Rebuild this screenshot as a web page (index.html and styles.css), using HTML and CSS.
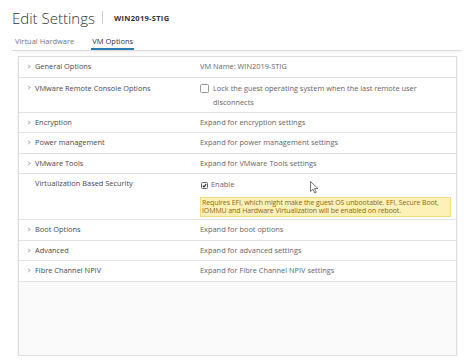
FILE: index.html
```html
<!DOCTYPE html>
<html>
	<head>
		<meta charset="UTF-8">
		<title>Edit Settings</title>
		<link rel="stylesheet" href="styles.css">
	</head>
	<body>
		<div class="dialog">
			<div class="head">
				<h1>Edit Settings</h1>
				<span class="sep"></span>
				<span class="vmname">WIN2019-STIG</span>
			</div>
			<div class="tabs">
				<span class="tab">Virtual Hardware</span>
				<span class="tab active">VM Options</span>
			</div>

			<div class="options">
				<div class="row">
					<div class="label"><span class="caret"></span>General Options</div>
					<div class="value">VM Name: WIN2019-STIG</div>
				</div>
				<div class="row tall">
					<div class="label"><span class="caret"></span>VMware Remote Console Options</div>
					<div class="value check">
						<span class="box"></span>
						<span>Lock the guest operating system when the last remote user disconnects</span>
					</div>
				</div>
				<div class="row">
					<div class="label"><span class="caret"></span>Encryption</div>
					<div class="value">Expand for encryption settings</div>
				</div>
				<div class="row">
					<div class="label"><span class="caret"></span>Power management</div>
					<div class="value">Expand for power management settings</div>
				</div>
				<div class="row">
					<div class="label"><span class="caret"></span>VMware Tools</div>
					<div class="value">Expand for VMware Tools settings</div>
				</div>
				<div class="row vbs">
					<div class="label"><span class="caret none"></span>Virtualization Based Security</div>
					<div class="value">
						<div class="enable">
							<span class="box checked">
								<svg width="6" height="6" viewBox="0 0 6 6"><path d="M1 3.2 L2.4 4.6 L5 1.4" fill="none" stroke="#222" stroke-width="1.3"/></svg>
							</span>
							Enable
							<svg class="cursor" width="9" height="13" viewBox="0 0 9 13"><path d="M0.5 0.5 L0.5 10.5 L3 8.2 L4.8 12 L6.3 11.3 L4.6 7.6 L8 7.6 Z" fill="#fff" stroke="#555" stroke-width="0.8" stroke-linejoin="round"/></svg>
						</div>
						<div class="warn">Requires EFI, which might make the guest OS unbootable. EFI, Secure Boot, IOMMU and Hardware Virtualization will be enabled on reboot.</div>
					</div>
				</div>
				<div class="row">
					<div class="label"><span class="caret"></span>Boot Options</div>
					<div class="value">Expand for boot options</div>
				</div>
				<div class="row">
					<div class="label"><span class="caret"></span>Advanced</div>
					<div class="value">Expand for advanced settings</div>
				</div>
				<div class="row">
					<div class="label"><span class="caret"></span>Fibre Channel NPIV</div>
					<div class="value">Expand for Fibre Channel NPIV settings</div>
				</div>
				<div class="empty"></div>
			</div>
		</div>
	</body>
</html>
```

FILE: styles.css
```css
body{margin:0;background:#fff;font-family:"Open Sans","Liberation Sans",sans-serif;color:#565656;}
.dialog{padding:0 0 0 12px;width:450px;}

.head{display:flex;align-items:center;height:35px;}
.head h1{margin:0;font-size:15px;font-weight:300;color:#333;line-height:20px;}
.head .sep{width:1px;height:13px;background:#ccc;margin:0 11px 0 7px;}
.head .vmname{font-size:7.5px;font-weight:700;color:#333;letter-spacing:0.3px;}

.tabs{display:flex;gap:17px;height:15px;border-bottom:1px solid #ddd;padding-left:3px;box-shadow:0 3px 3px -2px #eee;}
.tab{font-size:7.5px;color:#777;line-height:13px;}
.tab.active{color:#333;border-bottom:2px solid #2a7cae;padding:0 1px;}

.options{margin:5px 0 0 6px;width:437px;border:1px solid #ddd;background:#fafafa;box-shadow:0 1px 2px #e6e6e6;}
.row{display:flex;background:#fff;border-bottom:1px solid #e2e2e2;font-size:7.4px;line-height:11.5px;}
.row .label{width:181px;padding:4px 0 4px 7px;display:flex;align-items:flex-start;color:#4a4a4a;box-sizing:border-box;}
.row .value{flex:1;padding:4px 0;color:#666;}
.caret{width:8px;height:11.5px;position:relative;margin-right:1px;flex:none;}
.caret:after{content:"";position:absolute;left:1px;top:50%;margin-top:-1.5px;width:2px;height:2px;border-top:1px solid #b5b5b5;border-right:1px solid #b5b5b5;transform:rotate(45deg);}
.caret.none:after{display:none;}

.row.tall .value{padding:3px 0;line-height:14px;}
.row.tall .label{padding-top:3px;line-height:14px;}
.row.tall .caret{height:14px;}
.check{display:flex;align-items:flex-start;}
.check span:last-child{width:215px;}
.box{width:7px;height:7px;border:1px solid #999;border-radius:1.5px;margin:3px 4px 0 0;flex:none;background:#fff;}

.row.vbs .value{padding-bottom:2px;}
.enable{display:flex;align-items:center;height:14px;position:relative;}
.box.checked{width:5px;height:5px;margin:0 3px 0 1px;border-color:#666;display:flex;}
.box.checked svg{width:5px;height:5px;}
.cursor{position:absolute;left:110px;top:3px;}
.warn{margin-top:5px;width:247px;background:#fdf1b8;border:1px solid #f3da7a;font-size:7px;line-height:8px;color:#8b6a10;padding:1px 1px;letter-spacing:-0.1px;}

.empty{height:73px;}
```
